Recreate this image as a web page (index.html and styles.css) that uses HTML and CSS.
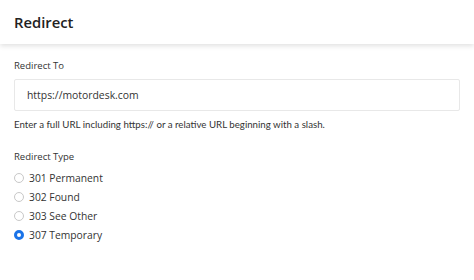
FILE: index.html
```html
<!DOCTYPE html>
<html>
<head>
<meta charset="utf-8">
<link rel="stylesheet" href="styles.css">
</head>
<body>
<div class="header"><h1 class="title">Redirect</h1></div>
<div class="content">
  <div class="label">Redirect To</div>
  <div class="input">https://motordesk.com</div>
  <div class="help">Enter a full URL including https:// or a relative URL beginning with a slash.</div>
  <div class="label type-label">Redirect Type</div>
  <div class="radios">
    <div class="radio"><span class="dot"></span><span>301 Permanent</span></div>
    <div class="radio"><span class="dot"></span><span>302 Found</span></div>
    <div class="radio"><span class="dot"></span><span>303 See Other</span></div>
    <div class="radio"><span class="dot checked"></span><span>307 Temporary</span></div>
  </div>
</div>
</body>
</html>
```
FILE: styles.css
```css
html, body { margin: 0; padding: 0; background: #fff; }
body { font-family: "Open Sans", "Noto Sans", sans-serif; color: #333; width: 474px; height: 280px; overflow: hidden; }
.header {
  height: 44px;
  box-shadow: 0 2px 5px rgba(0,0,0,0.12);
  display: flex; align-items: center;
  padding: 0 14px;
  position: relative;
}
.title { margin: 0; font-size: 14.8px; font-weight: 600; color: #222; line-height: 1; }
.content { padding: 15px 14px 0 14px; }
.label { font-size: 9.5px; color: #333; line-height: 14px; }
.input {
  margin-top: 6px;
  height: 30px;
  border: 1px solid #e8e8e8;
  border-radius: 2px;
  display: flex; align-items: center;
  padding-left: 12px;
  font-size: 10.4px;
  color: #333;
}
.help { font-family: "Lato", sans-serif; font-size: 9.7px; color: #333; margin-top: 6px; line-height: 14px; }
.type-label { margin-top: 19px; }
.radios { margin-top: 4px; display: flex; flex-direction: column; }
.radio { display: flex; align-items: center; height: 19px; font-size: 10.3px; color: #333; }
.dot {
  width: 8px; height: 8px; border-radius: 50%;
  border: 1px solid #c8c8c8; margin-right: 5px; box-sizing: content-box;
}
.dot.checked { border: 3px solid #1a73e8; width: 4px; height: 4px; background: #fff; }
```
